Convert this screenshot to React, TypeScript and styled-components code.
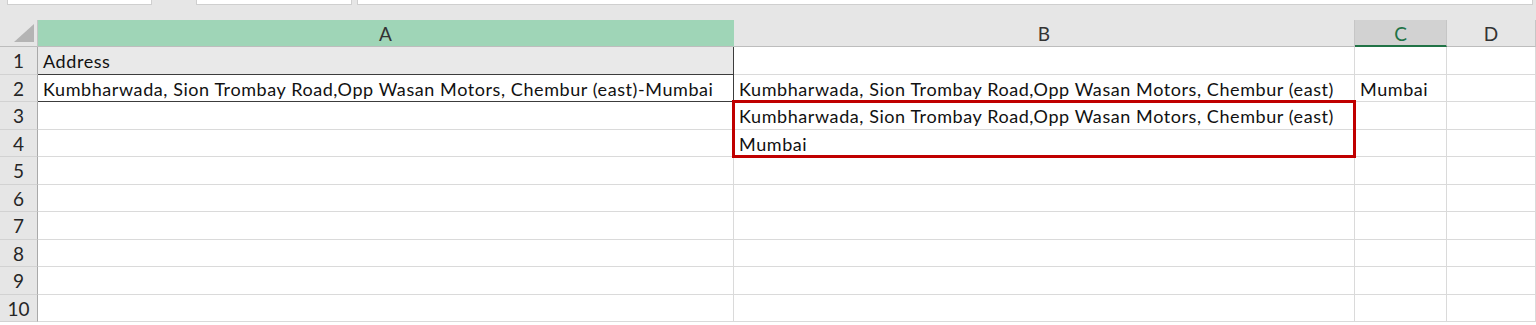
import styled, { createGlobalStyle } from 'styled-components';

const GlobalStyles = createGlobalStyle`
  html, body {
    margin: 0;
    padding: 0;
    background: #ffffff;
    overflow: hidden;
  }
  body {
    font-family: 'Lato', 'Liberation Sans', sans-serif;
  }
`;

const Sheet = styled.div`
  width: 1536px;
  height: 325px;
  background: #e6e6e6;
  display: flex;
  flex-direction: column;
`;

const TopStrip = styled.div`
  height: 20px;
  display: flex;
  align-items: flex-start;
  padding-left: 7px;
`;

const Field = styled.div<{ $w: string; $gap?: number }>`
  width: ${(p) => p.$w};
  height: 5px;
  margin-left: ${(p) => p.$gap ?? 0}px;
  background: #ffffff;
  border: 1px solid #cfcfcf;
  border-top: none;
  box-sizing: border-box;
`;

const Grid = styled.div`
  display: grid;
  grid-template-columns: 38px 696px 621px 92px 1fr;
  grid-template-rows: 27px repeat(10, 27.5px);
  background: #ffffff;
  flex: 1;
  overflow: hidden;
`;

const Corner = styled.div`
  grid-row: 1;
  grid-column: 1;
  background: #e6e6e6;
  border-right: 1px solid #c4c4c4;
  border-bottom: 1px solid #bdbdbd;
  box-sizing: border-box;
  display: flex;
  align-items: flex-end;
  justify-content: flex-end;
  padding: 0 3px 4px 0;
`;

const ColHead = styled.div<{ $col: number; $state?: 'selected' | 'active' }>`
  grid-row: 1;
  grid-column: ${(p) => p.$col};
  background: ${(p) =>
    p.$state === 'selected' ? '#9fd5b7' : p.$state === 'active' ? '#d2d2d2' : '#e6e6e6'};
  color: ${(p) => (p.$state === 'active' ? '#217346' : '#333333')};
  border-right: 1px solid ${(p) => (p.$state === 'selected' ? '#9fd5b7' : '#c6c6c6')};
  border-bottom: ${(p) => (p.$state === 'active' ? '2px solid #217346' : '1px solid #bdbdbd')};
  box-sizing: border-box;
  display: flex;
  align-items: center;
  justify-content: center;
  font-size: 19px;
  padding-top: 1px;
`;

const RowHead = styled.div<{ $row: number }>`
  grid-row: ${(p) => p.$row};
  grid-column: 1;
  background: #e6e6e6;
  color: #262626;
  border-right: 1px solid #a9a9a9;
  border-bottom: 1px solid #d2d2d2;
  box-sizing: border-box;
  display: flex;
  align-items: center;
  justify-content: center;
  font-size: 19px;
  padding-top: 1px;
`;

const Cell = styled.div<{ $row: number; $col: number; $fill?: boolean; $boxed?: boolean }>`
  grid-row: ${(p) => p.$row};
  grid-column: ${(p) => p.$col};
  background: ${(p) => (p.$fill ? '#e9e9e9' : '#ffffff')};
  border-right: 1px solid ${(p) => (p.$boxed ? '#3c3c3c' : '#dadada')};
  border-bottom: 1px solid ${(p) => (p.$boxed ? '#3c3c3c' : '#dadada')};
  box-sizing: border-box;
  display: flex;
  align-items: center;
  padding: 2px 0 0 5px;
  font-size: 18px;
  letter-spacing: 0.58px;
  color: #111111;
  white-space: nowrap;
  overflow: hidden;
`;

const Highlight = styled.div`
  grid-column: 3;
  grid-row: 4 / 6;
  margin: -2px -1px -1px -2px;
  border: 3px solid #c00000;
  pointer-events: none;
  z-index: 1;
`;

const COLUMNS = ['A', 'B', 'C', 'D'] as const;
const FULL = 'Kumbharwada, Sion Trombay Road,Opp Wasan Motors, Chembur (east)';

const data: Record<string, string> = {
  A1: 'Address',
  A2: `${FULL}-Mumbai`,
  B2: FULL,
  C2: 'Mumbai',
  B3: FULL,
  B4: 'Mumbai',
};

export default function App() {
  const rows = Array.from({ length: 10 }, (_, i) => i + 1);
  return (
    <>
      <GlobalStyles />
      <Sheet>
        <TopStrip>
          <Field $w="145px" />
          <Field $w="156px" $gap={44} />
          <Field $w="1176px" $gap={5} />
        </TopStrip>
        <Grid>
          <Corner>
            <svg width="20" height="18" viewBox="0 0 20 18">
              <polygon points="20,0 20,18 0,18" fill="#b4b4b4" />
            </svg>
          </Corner>
          {COLUMNS.map((c, i) => (
            <ColHead
              key={c}
              $col={i + 2}
              $state={c === 'A' ? 'selected' : c === 'C' ? 'active' : undefined}
            >
              {c}
            </ColHead>
          ))}
          {rows.map((r) => (
            <Row key={r} r={r} />
          ))}
          <Highlight />
        </Grid>
      </Sheet>
    </>
  );
}

function Row({ r }: { r: number }) {
  return (
    <>
      <RowHead $row={r + 1}>{r}</RowHead>
      {COLUMNS.map((c, i) => {
        const ref = `${c}${r}`;
        return (
          <Cell
            key={ref}
            $row={r + 1}
            $col={i + 2}
            $fill={ref === 'A1'}
            $boxed={c === 'A' && r <= 2}
          >
            {data[ref]}
          </Cell>
        );
      })}
    </>
  );
}
